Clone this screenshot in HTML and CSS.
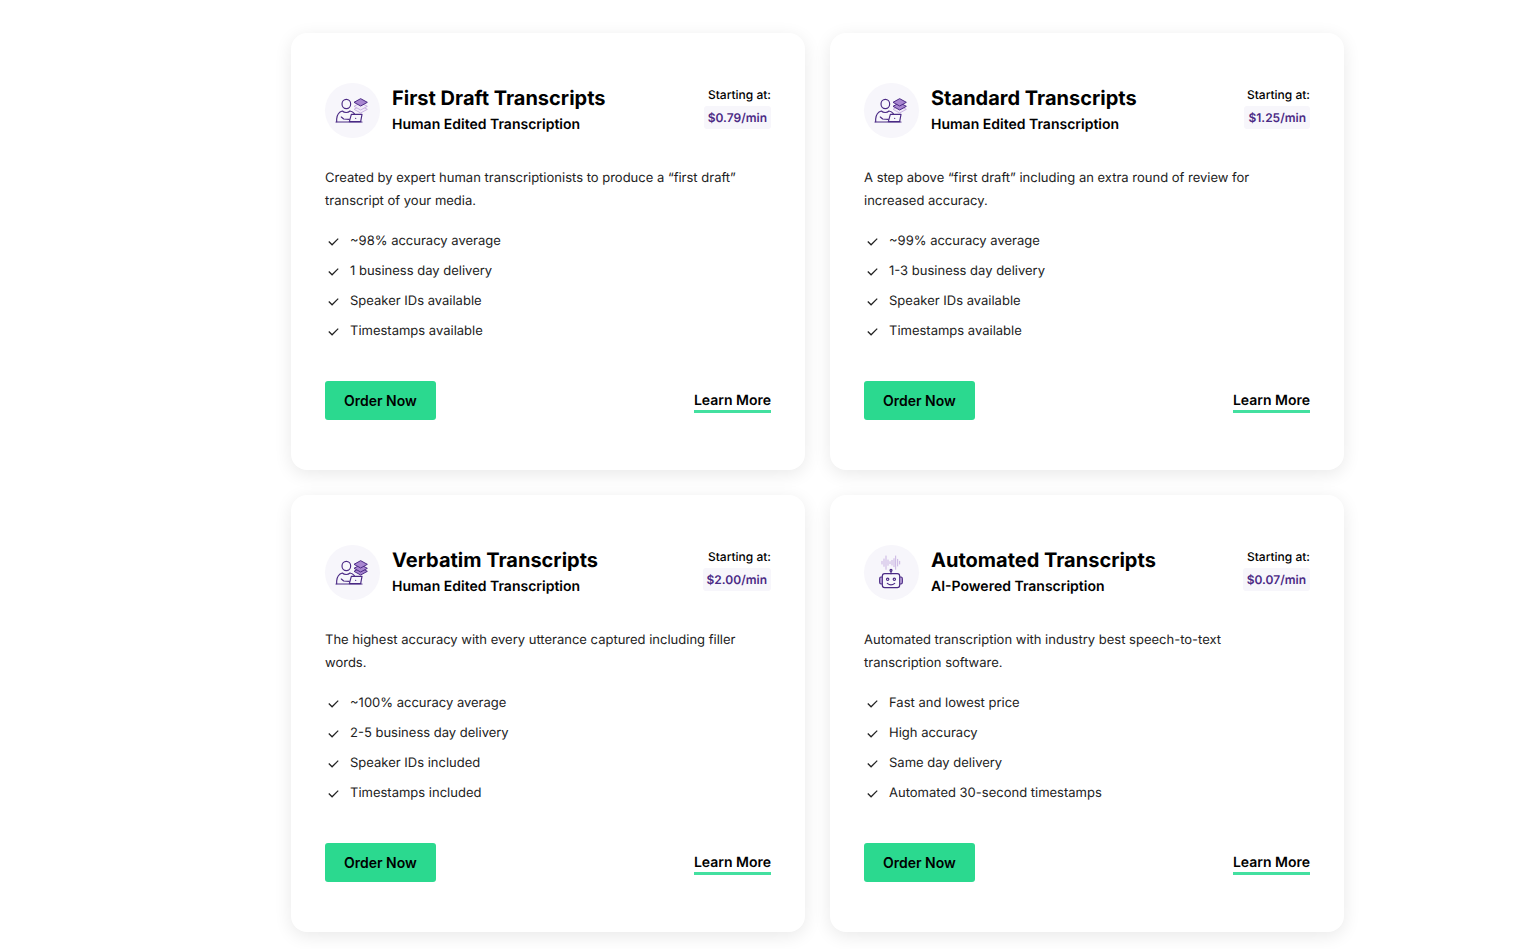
FILE: index.html
```html
<!DOCTYPE html>
<html lang="en">
<head>
  <meta charset="UTF-8" />
  <meta name="viewport" content="width=device-width, initial-scale=1" />
  <title>Transcription Services</title>
  <link rel="stylesheet" href="styles.css">
</head>
<body>
  <!-- shared icon shapes -->
  <svg class="sprite" aria-hidden="true">
    <symbol id="person" viewBox="14 15 165 165">
      <g fill="none" stroke="#4b2a85" stroke-width="3.5" stroke-linejoin="round" stroke-linecap="round">
        <ellipse cx="78" cy="78" rx="13" ry="14" />
        <path d="M49 131V123C50 111 55 102 66 99C72 105 83 105 89 99C95 100 99 103 102 107" />
        <path d="M63 117L70 123L87 124" />
        <path d="M93 109H125L121 131H87Z" fill="#f7f6fb" />
        <path d="M47 132H125" />
      </g>
      <circle cx="106" cy="121" r="2" fill="#4b2a85" />
    </symbol>
    <symbol id="layer" viewBox="14 15 165 165">
      <path d="M121 62L141 73L121 84L101 73Z" />
    </symbol>
    <symbol id="check" viewBox="0 0 18 18">
      <path d="M4 9L7.5 12.5L14 6" fill="none" stroke="#222" stroke-width="1.3" />
    </symbol>
  </svg>

  <main class="plans">
    <section class="card">
      <header class="card-header">
        <svg class="icon" viewBox="0 0 55 55" aria-hidden="true">
          <use href="#layer" class="layer light" y="7" />
          <use href="#layer" class="layer light" y="4" />
          <use href="#layer" class="layer" />
          <use href="#person" />
        </svg>
        <div class="titles">
          <h2>First Draft Transcripts</h2>
          <h3>Human Edited Transcription</h3>
        </div>
        <div class="price">
          <span>Starting at:</span>
          <strong>$0.79/min</strong>
        </div>
      </header>
      <p>Created by expert human transcriptionists to produce a “first draft” transcript of your media.</p>
      <ul>
        <li><svg><use href="#check" /></svg>~98% accuracy average</li>
        <li><svg><use href="#check" /></svg>1 business day delivery</li>
        <li><svg><use href="#check" /></svg>Speaker IDs available</li>
        <li><svg><use href="#check" /></svg>Timestamps available</li>
      </ul>
      <footer class="actions">
        <button type="button">Order Now</button>
        <a href="#">Learn More</a>
      </footer>
    </section>

    <section class="card">
      <header class="card-header">
        <svg class="icon" viewBox="0 0 55 55" aria-hidden="true">
          <use href="#layer" class="layer light" y="7" />
          <use href="#layer" class="layer" y="4" />
          <use href="#layer" class="layer" />
          <use href="#person" />
        </svg>
        <div class="titles">
          <h2>Standard Transcripts</h2>
          <h3>Human Edited Transcription</h3>
        </div>
        <div class="price">
          <span>Starting at:</span>
          <strong>$1.25/min</strong>
        </div>
      </header>
      <p>A step above “first draft” including an extra round of review for increased accuracy.</p>
      <ul>
        <li><svg><use href="#check" /></svg>~99% accuracy average</li>
        <li><svg><use href="#check" /></svg>1-3 business day delivery</li>
        <li><svg><use href="#check" /></svg>Speaker IDs available</li>
        <li><svg><use href="#check" /></svg>Timestamps available</li>
      </ul>
      <footer class="actions">
        <button type="button">Order Now</button>
        <a href="#">Learn More</a>
      </footer>
    </section>

    <section class="card">
      <header class="card-header">
        <svg class="icon" viewBox="0 0 55 55" aria-hidden="true">
          <use href="#layer" class="layer" y="7" />
          <use href="#layer" class="layer" y="4" />
          <use href="#layer" class="layer" />
          <use href="#person" />
        </svg>
        <div class="titles">
          <h2>Verbatim Transcripts</h2>
          <h3>Human Edited Transcription</h3>
        </div>
        <div class="price">
          <span>Starting at:</span>
          <strong>$2.00/min</strong>
        </div>
      </header>
      <p>The highest accuracy with every utterance captured including filler words.</p>
      <ul>
        <li><svg><use href="#check" /></svg>~100% accuracy average</li>
        <li><svg><use href="#check" /></svg>2-5 business day delivery</li>
        <li><svg><use href="#check" /></svg>Speaker IDs included</li>
        <li><svg><use href="#check" /></svg>Timestamps included</li>
      </ul>
      <footer class="actions">
        <button type="button">Order Now</button>
        <a href="#">Learn More</a>
      </footer>
    </section>

    <section class="card">
      <header class="card-header">
        <svg class="icon" viewBox="14 15 165 165" aria-hidden="true">
          <path d="M68 64V72M74 57V79M80 48V88M86 60V76M92 65V71M98 61V75M104 56V80M109 48V88M115 58V78M121 64V72" fill="none" stroke="#c9b3e2" stroke-width="3" stroke-linecap="round" />
          <g fill="none" stroke="#4b2a85" stroke-width="3.5" stroke-linecap="round">
            <path d="M68 111H65Q61 111 61 116V127Q61 132 65 132H68M122 111H125Q129 111 129 116V127Q129 132 125 132H122" fill="#c9b3e2" />
            <rect x="69" y="101" width="52" height="42" rx="7" fill="#f7f6fb" />
            <path d="M95 94V101M84 130Q95 139 106 130" />
            <circle cx="95" cy="91" r="3" />
            <circle cx="85" cy="118" r="3.5" />
            <circle cx="105" cy="118" r="3.5" />
          </g>
        </svg>
        <div class="titles">
          <h2>Automated Transcripts</h2>
          <h3>AI-Powered Transcription</h3>
        </div>
        <div class="price">
          <span>Starting at:</span>
          <strong>$0.07/min</strong>
        </div>
      </header>
      <p>Automated transcription with industry best speech-to-text transcription software.</p>
      <ul>
        <li><svg><use href="#check" /></svg>Fast and lowest price</li>
        <li><svg><use href="#check" /></svg>High accuracy</li>
        <li><svg><use href="#check" /></svg>Same day delivery</li>
        <li><svg><use href="#check" /></svg>Automated 30-second timestamps</li>
      </ul>
      <footer class="actions">
        <button type="button">Order Now</button>
        <a href="#">Learn More</a>
      </footer>
    </section>
  </main>
</body>
</html>
```
FILE: styles.css
```css
* {
  box-sizing: border-box;
}
body {
  margin: 0;
  font-family: Inter, sans-serif;
  font-size: 13px;
  line-height: 23px;
  text-rendering: geometricPrecision;
  background: #fff;
  color: #222;
}
.sprite {
  display: none;
}
.plans {
  display: grid;
  grid-template-columns: 1fr 1fr;
  gap: 25px;
  padding: 33px 192px 17px 291px;
}
.card {
  padding: 50px 34px;
  background: #fff;
  border-radius: 16px;
  box-shadow: 0 4px 18px rgba(0,0,0,0.09);
}
.card-header {
  display: flex;
  gap: 12px;
  margin-bottom: 29px;
}
.icon {
  width: 55px;
  height: 55px;
  flex: none;
  border-radius: 50%;
  background: #f7f6fb;
}
.layer {
  fill: #a886d0;
  stroke: #4b2a85;
  stroke-width: 3px;
  stroke-linejoin: round;
}
.layer.light {
  fill: #f0eaf8;
  stroke: #c9b3e2;
}
.titles {
  flex: 1;
}
h2, h3, p, ul {
  margin: 0;
}
h2 {
  font-size: 20px;
  line-height: 30px;
  font-weight: 700;
  color: #000;
}
h3 {
  font-size: 14px;
  line-height: 23px;
  font-weight: 600;
  color: #000;
}
.card p {
  padding-right: 20px;
}
.price {
  display: flex;
  flex-direction: column;
  align-items: flex-end;
  font-size: 12px;
  font-weight: 500;
  color: #000;
}
.price strong {
  padding: 0 4px;
  border-radius: 3px;
  background: #f7f6fb;
  color: #4b2a85;
  font-weight: 600;
}
ul {
  display: grid;
  gap: 7px;
  margin: 17px 0 38px;
  padding: 0;
  list-style: none;
}
li {
  display: flex;
  align-items: center;
  gap: 8px;
}
li svg {
  width: 17px;
  height: 17px;
}
.actions {
  display: flex;
  justify-content: space-between;
  align-items: center;
  font-size: 14px;
}
button {
  height: 39px;
  padding: 0 19px;
  border: none;
  border-radius: 3px;
  background: #2bd98f;
  color: #000;
  font-family: inherit;
  font-size: 14px;
  font-weight: 600;
}
.actions a {
  padding-top: 3px;
  border-bottom: 3px solid #43e0a0;
  color: #000;
  font-weight: 600;
  line-height: 19px;
  text-decoration: none;
}
```
